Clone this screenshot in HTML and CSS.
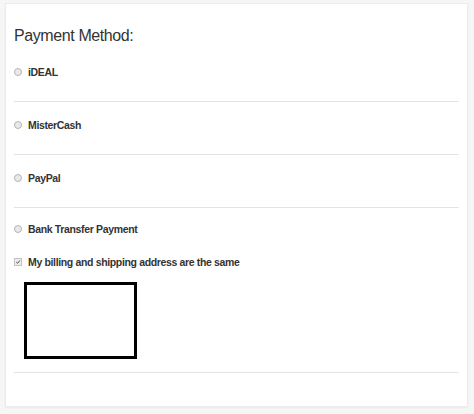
FILE: index.html
```html
<!DOCTYPE html>
<html>
<head>
<meta charset="utf-8">
<link rel="stylesheet" href="styles.css">
</head>
<body>
<div class="card">
  <h2 class="title">Payment Method:</h2>
  <div class="option first">
    <label class="row"><span class="radio"></span><span class="text">iDEAL</span></label>
  </div>
  <div class="option">
    <label class="row"><span class="radio"></span><span class="text">MisterCash</span></label>
  </div>
  <div class="option">
    <label class="row"><span class="radio"></span><span class="text">PayPal</span></label>
  </div>
  <div class="option last">
    <label class="row"><span class="radio"></span><span class="text">Bank Transfer Payment</span></label>
    <label class="row check-row"><span class="check"><svg viewBox="0 0 7 7" width="7" height="7"><path d="M1.5 3.6 L3 5 L5.6 1.8" fill="none" stroke="#444" stroke-width="1.1"/></svg></span><span class="text">My billing and shipping address are the same</span></label>
    <div class="box"></div>
  </div>
</div>
</body>
</html>
```
FILE: styles.css
```css
html, body {
  margin: 0;
  padding: 0;
}
body {
  background: #f6f6f6;
  width: 474px;
  height: 414px;
  font-family: "Liberation Sans", Arial, sans-serif;
  color: #333;
}
.card {
  margin: 3px 5px 0 5px;
  width: 445px;
  height: 380px;
  padding: 22px 8px 0 8px;
  background: #fff;
  border: 1px solid #ebebeb;
  box-shadow: 0 1px 2px rgba(0,0,0,0.05);
}
.title {
  margin: 0;
  font-size: 16px;
  letter-spacing: -0.4px;
  font-weight: normal;
  line-height: 20px;
  color: #333;
}
.option {
  padding: 16px 0 22px 0;
  border-bottom: 1px solid #e3e3e3;
}
.option.first {
  padding-top: 19px;
}
.option.last {
  padding-top: 14px;
  padding-bottom: 13px;
}
.row {
  display: flex;
  align-items: center;
  height: 14px;
  font-size: 10.5px;
  letter-spacing: -0.35px;
  font-weight: bold;
  color: #333;
}
.radio {
  width: 6px;
  height: 6px;
  border: 1px solid #b5b5b5;
  border-radius: 50%;
  background: #e9e9e9;
  margin-right: 6px;
}
.check-row {
  margin-top: 19px;
}
.check {
  width: 6px;
  height: 6px;
  border: 1px solid #c4c4c4;
  background: #ececec;
  margin-right: 6px;
  display: flex;
}
.check svg {
  width: 6px;
  height: 6px;
}
.box {
  margin: 13px 0 0 10px;
  width: 107px;
  height: 71px;
  border: 3px solid #000;
}
```
